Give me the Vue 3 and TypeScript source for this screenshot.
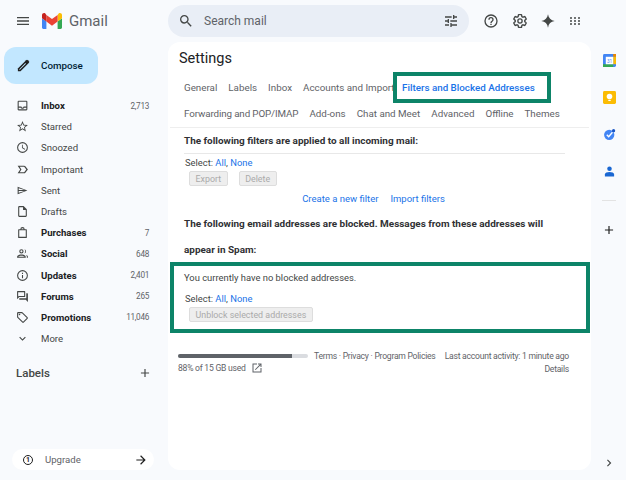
<template>
  <div class="app">
    <aside class="sidebar">
      <div class="brand">
        <svg class="menu" viewBox="0 0 24 24"><path d="M3 18h18v-2H3v2zm0-5h18v-2H3v2zm0-7v2h18V6H3z" /></svg>
        <svg class="logo" viewBox="0 0 20 16">
          <path fill="#4285f4" d="M1.4 16h3V8.600L0 5.300v9.300C0 15.400.6 16 1.400 16z" />
          <path fill="#34a853" d="M15.600 16h3c.8 0 1.400-.6 1.400-1.400V5.300l-4.400 3.300z" />
          <path fill="#fbbc04" d="M15.600 1.900v6.700L20 5.300V2.100c0-1.700-2-2.700-3.300-1.600z" />
          <path fill="#ea4335" d="M4.400 8.600V1.900L10 6.100l5.600-4.200v6.700L10 12.800z" />
          <path fill="#c5221f" d="M0 2.100v3.200l4.400 3.300V1.900L3.300.5C2-.6 0 .4 0 2.100z" />
        </svg>
        <span class="wordmark">Gmail</span>
      </div>
      <button class="compose">
        <svg viewBox="0 0 24 24"><path d="M3 21v-4.200L16.200 3.600a2 2 0 0 1 2.800 0l1.400 1.400a2 2 0 0 1 0 2.800L7.200 21H3z" /><path fill="#c2e7ff" d="M5.300 18.700h.9L15.900 9l-.9-.9-9.700 9.700z" /></svg>
        <span>Compose</span>
      </button>
      <nav class="nav">
        <div v-for="item in navItems" :key="item.label" class="nav-row" :class="{ strong: item.strong }">
          <svg viewBox="0 0 24 24"><path :d="item.icon" /></svg>
          <span class="nav-label">{{ item.label }}</span>
          <span class="nav-count">{{ item.count }}</span>
        </div>
      </nav>
      <div class="labels">
        <span>Labels</span>
        <svg viewBox="0 0 24 24"><path d="M19 13h-6v6h-2v-6H5v-2h6V5h2v6h6z" /></svg>
      </div>
      <div class="upgrade">
        <span class="one">1</span>
        <span class="upgrade-text">Upgrade</span>
        <svg viewBox="0 0 24 24"><path d="m12 4-1.400 1.400 5.600 5.600H4v2h12.200l-5.600 5.600L12 20l8-8z" /></svg>
      </div>
    </aside>

    <div class="center">
      <header class="topbar">
        <div class="search">
          <svg viewBox="0 0 24 24"><path d="M15.500 14h-.79l-.28-.27A6.471 6.471 0 0 0 16 9.500 6.500 6.500 0 1 0 9.500 16c1.610 0 3.090-.59 4.230-1.570l.27.28v.79l5 4.990L20.490 19l-4.990-5zm-6 0C7.010 14 5 11.990 5 9.500S7.010 5 9.500 5 14 7.010 14 9.500 11.990 14 9.500 14z" /></svg>
          <span class="search-text">Search mail</span>
          <svg viewBox="0 0 24 24"><path d="M3 17v2h6v-2H3zM3 5v2h10V5H3zm10 16v-2h8v-2h-8v-2h-2v6h2zM7 9v2H3v2h4v2h2V9H7zm14 4v-2H11v2h10zm-6-4h2V7h4V5h-4V3h-2v6z" /></svg>
        </div>
        <div class="actions">
          <svg viewBox="0 0 24 24"><path d="M11 18h2v-2h-2v2zm1-16a10 10 0 1 0 0 20 10 10 0 0 0 0-20zm0 18a8 8 0 1 1 0-16 8 8 0 0 1 0 16zm0-14a4 4 0 0 0-4 4h2a2 2 0 1 1 4 0c0 2-3 1.800-3 5h2c0-2.300 3-2.500 3-5a4 4 0 0 0-4-4z" /></svg>
          <svg class="gear" viewBox="0 0 24 24"><path d="M19.140 12.940c.04-.3.060-.61.060-.94 0-.32-.02-.64-.07-.94l2.030-1.580a.49.49 0 0 0 .12-.61l-1.920-3.320a.488.488 0 0 0-.59-.22l-2.390.96c-.5-.38-1.030-.7-1.620-.94l-.36-2.540a.484.484 0 0 0-.48-.41h-3.840c-.24 0-.43.170-.47.410l-.36 2.540c-.59.240-1.130.570-1.620.940l-2.390-.96c-.22-.08-.47 0-.59.220L2.740 8.870c-.12.210-.08.470.12.610l2.030 1.580c-.05.300-.09.630-.09.940s.02.640.07.940l-2.030 1.580a.49.49 0 0 0-.12.61l1.920 3.320c.12.220.37.290.59.220l2.390-.96c.5.380 1.030.7 1.620.94l.36 2.540c.05.240.24.410.48.410h3.840c.24 0 .44-.17.47-.41l.36-2.540c.59-.24 1.130-.56 1.620-.94l2.390.96c.22.08.47 0 .59-.22l1.920-3.320c.12-.22.07-.47-.12-.61l-2.010-1.580z" /><circle cx="12" cy="12" r="3.200" /></svg>
          <svg viewBox="0 0 24 24"><path d="M12 2c.8 5.800 4.200 9.200 10 10-5.800.8-9.200 4.200-10 10-.8-5.800-4.200-9.200-10-10 5.800-.8 9.200-4.200 10-10z" /></svg>
          <svg class="apps" viewBox="0 0 24 24"><path d="M4 8a2 2 0 1 0 0-4 2 2 0 0 0 0 4zm8 0a2 2 0 1 0 0-4 2 2 0 0 0 0 4zm8 0a2 2 0 1 0 0-4 2 2 0 0 0 0 4zM4 14a2 2 0 1 0 0-4 2 2 0 0 0 0 4zm8 0a2 2 0 1 0 0-4 2 2 0 0 0 0 4zm8 0a2 2 0 1 0 0-4 2 2 0 0 0 0 4zM4 20a2 2 0 1 0 0-4 2 2 0 0 0 0 4zm8 0a2 2 0 1 0 0-4 2 2 0 0 0 0 4zm8 0a2 2 0 1 0 0-4 2 2 0 0 0 0 4z" /></svg>
        </div>
      </header>

      <main class="card">
        <h1 class="title">Settings</h1>
        <div class="tabs">
          <span v-for="tab in tabsOne" :key="tab" class="tab">{{ tab }}</span>
          <span class="tab active">Filters and Blocked Addresses</span>
        </div>
        <div class="tabs second">
          <span v-for="tab in tabsTwo" :key="tab" class="tab">{{ tab }}</span>
        </div>
        <section class="filters">
          <p class="bold first">The following filters are applied to all incoming mail:</p>
          <div class="select rule">Select: <a>All</a>, <a>None</a></div>
          <div class="btns">
            <span class="btn">Export</span>
            <span class="btn">Delete</span>
          </div>
          <div class="links"><a>Create a new filter</a><a>Import filters</a></div>
          <p class="bold blocked">The following email addresses are blocked. Messages from these addresses will appear in Spam:</p>
        </section>
        <section class="highlight">
          <p>You currently have no blocked addresses.</p>
          <div class="select">Select: <a>All</a>, <a>None</a></div>
          <div class="btns"><span class="btn">Unblock selected addresses</span></div>
        </section>
        <footer class="foot">
          <div class="storage">
            <div class="bar"><div class="bar-fill" :style="{ width: usedPct + '%' }"></div></div>
            <div class="used">
              <span>88% of 15 GB used</span>
              <svg viewBox="0 0 24 24"><path d="M19 19H5V5h7V3H3v18h18v-9h-2v7zM14 3v2h3.600l-9.800 9.800 1.400 1.400L19 6.400V10h2V3h-7z" /></svg>
            </div>
          </div>
          <span class="terms">Terms · Privacy · Program Policies</span>
          <div class="activity">
            <div>Last account activity: 1 minute ago</div>
            <div>Details</div>
          </div>
        </footer>
      </main>
    </div>

    <aside class="rail">
      <div class="rail-apps">
        <svg viewBox="0 0 14 14">
          <rect width="14" height="14" rx="1.500" fill="#4285f4" />
          <rect y="11" width="11" height="3" fill="#34a853" />
          <rect x="11" width="3" height="3" fill="#ea8600" />
          <rect x="11" y="3" width="3" height="8" fill="#fbbc04" />
          <rect x="3" y="3" width="8" height="8" fill="#fff" />
          <text x="7" y="9.200" text-anchor="middle" class="cal-num">31</text>
        </svg>
        <svg viewBox="0 0 14 14">
          <rect width="14" height="14" rx="1.500" fill="#fbbc04" />
          <circle cx="7" cy="6" r="3" fill="#fff" />
          <rect x="5.700" y="9.500" width="2.600" height="1.300" fill="#fff" />
        </svg>
        <svg viewBox="0 0 24 24">
          <circle cx="11.500" cy="12.500" r="9.500" fill="#4285f4" />
          <path d="M7 12.500l3.500 3.500 7-8" fill="none" stroke="#fff" stroke-width="2.600" />
          <circle cx="19.500" cy="5" r="3" fill="#1a56c4" />
        </svg>
        <svg viewBox="0 0 24 24">
          <circle cx="12" cy="7" r="4.200" fill="#1a67d2" />
          <path d="M3.500 21v-3.500C3.500 14.500 8 13 12 13s8.500 1.500 8.500 4.500V21z" fill="#1a67d2" />
        </svg>
      </div>
      <div class="rail-line"></div>
      <svg class="rail-plus" viewBox="0 0 24 24"><path d="M19 13h-6v6h-2v-6H5v-2h6V5h2v6h6z" /></svg>
      <svg class="rail-chevron" viewBox="0 0 24 24"><path d="M8.600 16.600 13.200 12 8.600 7.400 10 6l6 6-6 6z" /></svg>
    </aside>
  </div>
</template>

<script setup lang="ts">
interface NavItem {
  label: string;
  icon: string;
  count?: string;
  strong?: boolean;
}

const usedPct = 88;

const tabsOne = ['General', 'Labels', 'Inbox', 'Accounts and Import'];
const tabsTwo = ['Forwarding and POP/IMAP', 'Add-ons', 'Chat and Meet', 'Advanced', 'Offline', 'Themes'];

const navItems: NavItem[] = [
  { label: 'Inbox', count: '2,713', strong: true, icon: 'M19 3H5a2 2 0 0 0-2 2v14c0 1.100.9 2 2 2h14a2 2 0 0 0 2-2V5a2 2 0 0 0-2-2zm0 16H5v-3h3.600c.7 1.200 2 2 3.400 2s2.700-.8 3.400-2H19v3zm0-5h-5a2 2 0 0 1-4 0H5V5h14v9z' },
  { label: 'Starred', icon: 'M22 9.200l-7.200-.6L12 2 9.200 8.600 2 9.200l5.500 4.700L5.800 21l6.200-3.700 6.200 3.700-1.700-7.100L22 9.200zm-10 6.200-3.800 2.300 1-4.300-3.300-2.900 4.400-.4L12 6.100l1.700 4 4.400.4-3.300 2.900 1 4.300-3.800-2.300z' },
  { label: 'Snoozed', icon: 'M12 2a10 10 0 1 0 0 20 10 10 0 0 0 0-20zm0 18a8 8 0 1 1 0-16 8 8 0 0 1 0 16zm.5-13H11v6l5.200 3.200.8-1.300-4.500-2.700z' },
  { label: 'Important', icon: 'M3 5h12c1 0 1.700.4 2.300 1.100L22 12l-4.700 5.900c-.6.700-1.300 1.100-2.300 1.100H3l4.700-7zm3.800 2 3.300 5-3.300 5H15l4-5-4-5z' },
  { label: 'Sent', icon: 'M3 5v14l18-7zm2 3 10.500 3H5zm0 5h10.500L5 16z' },
  { label: 'Drafts', icon: 'M14 2H6a2 2 0 0 0-2 2v16c0 1.100.9 2 2 2h12a2 2 0 0 0 2-2V8zm4 18H6V4h7v5h5z' },
  { label: 'Purchases', count: '7', strong: true, icon: 'M19 6h-3a4 4 0 0 0-8 0H5a1 1 0 0 0-1 1v14a1 1 0 0 0 1 1h14a1 1 0 0 0 1-1V7a1 1 0 0 0-1-1zm-7-2a2 2 0 0 1 2 2h-4a2 2 0 0 1 2-2zm6 16H6V8h12z' },
  { label: 'Social', count: '648', strong: true, icon: 'M10 12a4 4 0 1 0 0-8 4 4 0 0 0 0 8zm0-6a2 2 0 1 1 0 4 2 2 0 0 1 0-4zm0 8c-2.700 0-8 1.300-8 4v2h16v-2c0-2.700-5.300-4-8-4zm-6 4c.2-.7 3.300-2 6-2s5.800 1.300 6 2zm11.500-6.100a4 4 0 0 0 0-7.800 6 6 0 0 1 0 7.800zM18 14.300c1.300.9 2 2 2 3.700v2h2v-2c0-1.900-2-3.200-4-3.700z' },
  { label: 'Updates', count: '2,401', strong: true, icon: 'M11 7h2v2h-2zm0 4h2v6h-2zm1-9a10 10 0 1 0 0 20 10 10 0 0 0 0-20zm0 18a8 8 0 1 1 0-16 8 8 0 0 1 0 16z' },
  { label: 'Forums', count: '265', strong: true, icon: 'M15 4v7H5.200L4 12.200V4zm1-2H3a1 1 0 0 0-1 1v14l4-4h10a1 1 0 0 0 1-1V3a1 1 0 0 0-1-1zm5 4h-2v9H6v2a1 1 0 0 0 1 1h11l4 4V7a1 1 0 0 0-1-1z' },
  { label: 'Promotions', count: '11,046', strong: true, icon: 'M21.400 11.600l-9-9A2 2 0 0 0 11 2H4a2 2 0 0 0-2 2v7c0 .6.200 1.100.6 1.400l9 9a2 2 0 0 0 2.800 0l7-7a2 2 0 0 0 0-2.800zM13 20 4 11V4h7l9 9zM6.500 8a1.500 1.500 0 1 0 0-3 1.500 1.500 0 0 0 0 3z' },
  { label: 'More', icon: 'M16.600 8.600 12 13.200 7.400 8.600 6 10l6 6 6-6z' },
];
</script>

<style scoped>
.app {
  width: 626px;
  height: 480px;
  display: flex;
  overflow: hidden;
  background: #f8fafd;
  color: #444746;
  font-family: Roboto, "Liberation Sans", sans-serif;
  font-size: 9.6px;
}

.sidebar {
  width: 168px;
  flex-shrink: 0;
  display: flex;
  flex-direction: column;
}

.brand {
  height: 42px;
  display: flex;
  align-items: center;
  padding-left: 15px;
  box-sizing: border-box;
}

.menu {
  width: 16px;
  height: 16px;
  fill: #444746;
}

.logo {
  width: 20px;
  height: 16px;
  margin-left: 11px;
}

.wordmark {
  margin-left: 7px;
  font-size: 15px;
  color: #5f6368;
}

.compose {
  width: 94px;
  height: 37px;
  margin: 5px 0 0 4px;
  padding: 0 0 0 12px;
  border: 0;
  border-radius: 12px;
  background: #c2e7ff;
  display: flex;
  align-items: center;
  gap: 10px;
  font-family: inherit;
  font-size: 9.8px;
  font-weight: 500;
  color: #001d35;
}

.compose svg {
  width: 15px;
  height: 15px;
  fill: #1f1f1f;
}

.nav {
  margin-top: 11px;
}

.nav-row {
  height: 21.2px;
  display: flex;
  align-items: center;
  padding: 0 19px 0 16px;
}

.nav-row svg {
  width: 13px;
  height: 13px;
  fill: #444746;
}

.nav-label {
  margin-left: 12px;
  flex: 1;
}

.nav-row.strong .nav-label {
  font-weight: 700;
  color: #202124;
}

.nav-count {
  font-size: 8.2px;
  letter-spacing: -0.3px;
  color: #5f6368;
}

.labels {
  margin-top: 17px;
  padding: 0 16px;
  display: flex;
  justify-content: space-between;
  align-items: center;
  font-size: 11.5px;
  font-weight: 500;
  color: #444746;
}

.labels svg {
  width: 14px;
  height: 14px;
  fill: #444746;
}

.upgrade {
  margin: auto 0 10px 12px;
  width: 142px;
  height: 21px;
  box-sizing: border-box;
  padding: 0 6px 0 11px;
  border-radius: 11px;
  background: #fff;
  display: flex;
  align-items: center;
}

.one {
  width: 8px;
  height: 8px;
  border: 1.3px solid #1f1f1f;
  border-radius: 50%;
  font-size: 7px;
  font-weight: 700;
  line-height: 8px;
  text-align: center;
  color: #1f1f1f;
}

.upgrade-text {
  margin-left: 12px;
  flex: 1;
  color: #5f6368;
}

.upgrade svg {
  width: 14px;
  height: 14px;
  fill: #1f1f1f;
}

.center {
  width: 423px;
  flex-shrink: 0;
  display: flex;
  flex-direction: column;
  padding-bottom: 10px;
}

.topbar {
  height: 42px;
  flex-shrink: 0;
  display: flex;
  align-items: center;
  box-sizing: border-box;
  padding-bottom: 1px;
}

.search {
  width: 301px;
  height: 32px;
  box-sizing: border-box;
  padding: 0 10px 0 10px;
  background: #e9eef6;
  border-radius: 16px;
  display: flex;
  align-items: center;
}

.search svg {
  width: 16px;
  height: 16px;
  fill: #444746;
}

.search-text {
  margin-left: 10px;
  flex: 1;
  font-size: 12px;
  color: #5f6368;
}

.actions {
  margin-left: 14px;
  display: flex;
  align-items: center;
  gap: 12.5px;
}

.actions svg {
  width: 16px;
  height: 16px;
  fill: #444746;
}

.actions .gear {
  fill: none;
  stroke: #444746;
  stroke-width: 2;
}

.actions .apps {
  width: 12px;
  height: 12px;
}

.card {
  flex: 1;
  background: #fff;
  border-radius: 12px;
  padding: 0 2px;
  display: flex;
  flex-direction: column;
  min-height: 0;
}

.title {
  margin: 7px 0 0 9px;
  font-size: 14.5px;
  font-weight: 400;
  line-height: 20px;
  color: #202124;
}

.tabs {
  display: flex;
  align-items: center;
  gap: 11px;
  padding-left: 14px;
  height: 28px;
  margin-top: 4px;
}

.tabs.second {
  margin-top: -1px;
  height: 26px;
  padding-bottom: 1px;
  border-bottom: 1px solid #eee;
}

.tab {
  font-size: 9.8px;
  color: #5f6368;
  white-space: nowrap;
}

.second .tab:first-child {
  letter-spacing: -0.12px;
}

.tab.active {
  margin-left: -13px;
  padding: 0 12px 0 5.5px;
  height: 31px;
  box-sizing: border-box;
  border: 4px solid #0d8468;
  display: flex;
  align-items: center;
  color: #1a73e8;
  font-weight: 500;
}

.filters {
  padding: 0 14px;
}

p {
  margin: 0;
}

.bold {
  font-size: 9.95px;
  font-weight: 700;
  color: #303134;
}

.first {
  height: 25px;
  line-height: 26px;
}

.select {
  margin-left: 1px;
  line-height: 15px;
  font-size: 9.4px;
  color: #444746;
}

.select.rule {
  margin-left: 0;
  padding-left: 1px;
  width: 380px;
  border-top: 1px solid #e8e8e8;
  padding-top: 1px;
}

a {
  color: #1a73e8;
}

.btns {
  display: flex;
  gap: 11px;
  padding-left: 5px;
  margin-top: 1px;
}

.btn {
  height: 15px;
  line-height: 14px;
  box-sizing: border-box;
  padding: 0 5.5px;
  border: 1px solid #ddd;
  border-radius: 2px;
  background: #eee;
  font-size: 8.9px;
  color: #aaa;
}

.links {
  display: flex;
  justify-content: center;
  gap: 12px;
  margin-top: 6px;
  line-height: 14px;
  padding-right: 12px;
  font-size: 9.5px;
}

.blocked {
  margin-top: 5px;
  line-height: 26px;
  width: 375px;
}

.highlight {
  margin: -1px -1px 0 0;
  height: 71px;
  box-sizing: border-box;
  border: 4px solid #0d8468;
  padding: 5px 10px 0;
  font-size: 9.4px;
}

.highlight p {
  line-height: 14px;
}

.highlight .select {
  margin-top: 6px;
}

.foot {
  margin-top: 17px;
  padding: 0 20px 0 8px;
  display: flex;
  align-items: flex-start;
  color: #5f6368;
  font-size: 8.6px;
  letter-spacing: -0.25px;
  line-height: 13px;
}

.storage {
  width: 130px;
  flex-shrink: 0;
}

.bar {
  margin-top: 4px;
  height: 3.5px;
  border-radius: 2px;
  background: #dadce0;
  overflow: hidden;
}

.bar-fill {
  height: 100%;
  background: #5f6368;
}

.used {
  margin-top: 4px;
  display: flex;
  align-items: center;
  gap: 5px;
  white-space: nowrap;
}

.used svg {
  width: 12px;
  height: 12px;
  fill: #5f6368;
}

.terms {
  margin-left: 6px;
  white-space: nowrap;
}

.activity {
  margin-left: auto;
  text-align: right;
  white-space: nowrap;
}

.rail {
  flex: 1;
  display: flex;
  flex-direction: column;
  align-items: center;
  padding-top: 54px;
  padding-bottom: 10px;
  margin-left: 1px;
}

.rail-apps {
  display: flex;
  flex-direction: column;
  gap: 24px;
}

.rail-apps svg {
  width: 13px;
  height: 13px;
  display: block;
}

.cal-num {
  font-family: Roboto, sans-serif;
  font-size: 5px;
  fill: #4285f4;
}

.rail-line {
  width: 14px;
  height: 1px;
  background: #e3e3e3;
  margin-top: 22px;
}

.rail-plus {
  width: 14px;
  height: 14px;
  margin-top: 22px;
  fill: #1f1f1f;
}

.rail-chevron {
  width: 14px;
  height: 14px;
  margin-top: auto;
  fill: #444746;
}
</style>
